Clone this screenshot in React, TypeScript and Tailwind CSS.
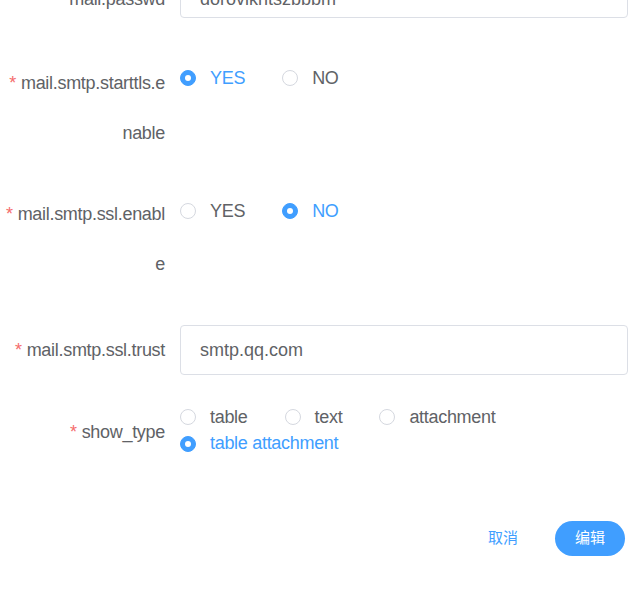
import * as React from 'react';

const LABEL_CN = 'w-[180px] shrink-0 pr-[15px] text-right text-[18px] tracking-[-0.3px] text-[#606266]';
const INPUT_CN = 'h-[50px] rounded-[4px] border border-[#dcdfe6] px-[19px] text-[18px] text-[#606266]';

const Star = () => <span className="mr-[5px] text-[#f56c6c]">*</span>;

type RadioProps = {
  label: string;
  checked?: boolean;
  rowCn: string;
};

const Radio = ({ label, checked, rowCn }: RadioProps) => (
  <span className={`${rowCn} mr-[37px] inline-flex items-center`}>
    {checked ? (
      <span className="flex h-4 w-4 items-center justify-center rounded-full border border-[#409eff] bg-[#409eff]">
        <span className="h-[6px] w-[6px] rounded-full bg-white" />
      </span>
    ) : (
      <span className="h-4 w-4 rounded-full border border-[#d5d8df] bg-white" />
    )}
    <span
      className={`pl-[14px] text-[18px] tracking-[-0.3px] ${checked ? 'text-[#409eff]' : 'text-[#606266]'}`}
    >
      {label}
    </span>
  </span>
);

export default function App() {
  return (
    <div className="h-[590px] w-[639px] overflow-hidden bg-white font-['Liberation_Sans','Noto_Sans_CJK_SC',sans-serif]">
      <div className="-mt-[32px] pr-[11px]">
        {/* mail.passwd */}
        <div className="flex">
          <div className={`${LABEL_CN} pt-[6px] leading-[50px]`}>mail.passwd</div>
          <div className={`${INPUT_CN} flex-1 pt-[12px] leading-[36px]`}>dorovikhtszbbbm</div>
        </div>

        {/* mail.smtp.starttls.enable */}
        <div className="mt-[34px] flex">
          <div className={`${LABEL_CN} leading-[50px]`}>
            <Star />
            mail.smtp.starttls.e
            <br />
            nable
          </div>
          <div className="flex flex-1 items-start">
            <Radio label="YES" checked rowCn="h-[40px]" />
            <Radio label="NO" rowCn="h-[40px]" />
          </div>
        </div>

        {/* mail.smtp.ssl.enable */}
        <div className="mt-[31px] flex">
          <div className={`${LABEL_CN} leading-[50px]`}>
            <Star />
            mail.smtp.ssl.enabl
            <br />e
          </div>
          <div className="flex flex-1 items-start">
            <Radio label="YES" rowCn="h-[44px]" />
            <Radio label="NO" checked rowCn="h-[44px]" />
          </div>
        </div>

        {/* mail.smtp.ssl.trust */}
        <div className="mt-[36px] flex">
          <div className={`${LABEL_CN} leading-[50px]`}>
            <Star />
            mail.smtp.ssl.trust
          </div>
          <div className={`${INPUT_CN} flex-1 leading-[48px]`}>smtp.qq.com</div>
        </div>

        {/* show_type */}
        <div className="mt-[29px] flex">
          <div className={`${LABEL_CN} pt-[3px] leading-[50px]`}>
            <Star />
            show_type
          </div>
          <div className="flex flex-1 flex-wrap">
            <Radio label="table" rowCn="h-[26px]" />
            <Radio label="text" rowCn="h-[26px]" />
            <Radio label="attachment" rowCn="h-[26px]" />
            <Radio label="table attachment" checked rowCn="h-[26px]" />
          </div>
        </div>

        {/* actions */}
        <div className="mt-[64px] flex items-center justify-end pr-[3px]">
          <button className="text-[15px] text-[#409eff]">取消</button>
          <button className="ml-[37px] h-[35px] w-[70px] rounded-full bg-[#409eff] text-[15px] text-white">
            编辑
          </button>
        </div>
      </div>
    </div>
  );
}
